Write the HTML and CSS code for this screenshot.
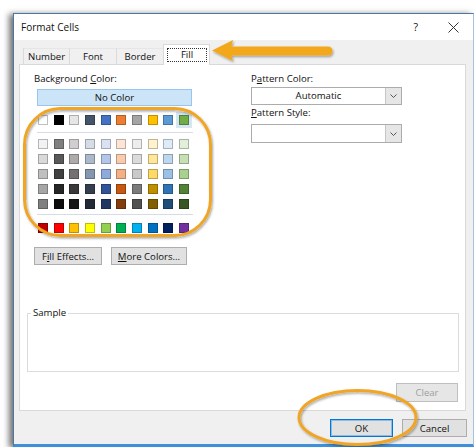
FILE: index.html
```html
<!DOCTYPE html>
<html>
<head>
<meta charset="utf-8">
<title>Format Cells</title>
<link rel="stylesheet" href="styles.css">
</head>
<body>
<div class="dialog">
  <div class="titlebar">
    <span class="title">Format Cells</span>
    <span class="help">?</span>
    <svg class="close" width="11" height="11" viewBox="0 0 11 11"><path d="M0.5 0.5L10.5 10.5M10.5 0.5L0.5 10.5" stroke="#333" stroke-width="1" fill="none"/></svg>
  </div>
  <div class="main">
    <div class="tabs">
      <div class="tab">Number</div>
      <div class="tab">Font</div>
      <div class="tab">Border</div>
      <div class="tab active"><span class="focus">Fill</span></div>
    </div>
    <div class="panel">
      <div class="top">
        <div class="left">
          <div class="label">Background <u>C</u>olor:</div>
          <div class="nocolor">No Color</div>
          <div class="palette">
            <div class="swrow">
              <span class="sw" style="background:#FFFFFF"></span>
              <span class="sw" style="background:#000000"></span>
              <span class="sw" style="background:#E7E6E6"></span>
              <span class="sw" style="background:#44546A"></span>
              <span class="sw" style="background:#4472C4"></span>
              <span class="sw" style="background:#ED7D31"></span>
              <span class="sw" style="background:#A5A5A5"></span>
              <span class="sw" style="background:#FFC000"></span>
              <span class="sw" style="background:#5B9BD5"></span>
              <span class="sw sel" style="background:#70AD47"></span>
            </div>
            <div class="sep"></div>
            <div class="swrow tints">
              <span class="sw" style="background:#F2F2F2"></span>
              <span class="sw" style="background:#808080"></span>
              <span class="sw" style="background:#D0CECE"></span>
              <span class="sw" style="background:#D6DCE4"></span>
              <span class="sw" style="background:#D9E1F2"></span>
              <span class="sw" style="background:#FCE4D6"></span>
              <span class="sw" style="background:#EDEDED"></span>
              <span class="sw" style="background:#FFF2CC"></span>
              <span class="sw" style="background:#DDEBF7"></span>
              <span class="sw" style="background:#E2EFDA"></span>

              <span class="sw" style="background:#D9D9D9"></span>
              <span class="sw" style="background:#595959"></span>
              <span class="sw" style="background:#AEAAAA"></span>
              <span class="sw" style="background:#ACB9CA"></span>
              <span class="sw" style="background:#B4C6E7"></span>
              <span class="sw" style="background:#F8CBAD"></span>
              <span class="sw" style="background:#DBDBDB"></span>
              <span class="sw" style="background:#FFE699"></span>
              <span class="sw" style="background:#BDD7EE"></span>
              <span class="sw" style="background:#C6E0B4"></span>

              <span class="sw" style="background:#BFBFBF"></span>
              <span class="sw" style="background:#404040"></span>
              <span class="sw" style="background:#757171"></span>
              <span class="sw" style="background:#8497B0"></span>
              <span class="sw" style="background:#8EA9DB"></span>
              <span class="sw" style="background:#F4B084"></span>
              <span class="sw" style="background:#C9C9C9"></span>
              <span class="sw" style="background:#FFD966"></span>
              <span class="sw" style="background:#9BC2E6"></span>
              <span class="sw" style="background:#A9D08E"></span>

              <span class="sw" style="background:#A6A6A6"></span>
              <span class="sw" style="background:#262626"></span>
              <span class="sw" style="background:#3A3838"></span>
              <span class="sw" style="background:#333F4F"></span>
              <span class="sw" style="background:#305496"></span>
              <span class="sw" style="background:#C65911"></span>
              <span class="sw" style="background:#7B7B7B"></span>
              <span class="sw" style="background:#BF8F00"></span>
              <span class="sw" style="background:#2F75B5"></span>
              <span class="sw" style="background:#548235"></span>

              <span class="sw" style="background:#808080"></span>
              <span class="sw" style="background:#0D0D0D"></span>
              <span class="sw" style="background:#171616"></span>
              <span class="sw" style="background:#222B35"></span>
              <span class="sw" style="background:#203764"></span>
              <span class="sw" style="background:#833C0C"></span>
              <span class="sw" style="background:#525252"></span>
              <span class="sw" style="background:#806000"></span>
              <span class="sw" style="background:#1F4E78"></span>
              <span class="sw" style="background:#375623"></span>
            </div>
            <div class="sep sep2"></div>
            <div class="swrow">
              <span class="sw" style="background:#C00000"></span>
              <span class="sw" style="background:#FF0000"></span>
              <span class="sw" style="background:#FFC000"></span>
              <span class="sw" style="background:#FFFF00"></span>
              <span class="sw" style="background:#92D050"></span>
              <span class="sw" style="background:#00B050"></span>
              <span class="sw" style="background:#00B0F0"></span>
              <span class="sw" style="background:#0070C0"></span>
              <span class="sw" style="background:#002060"></span>
              <span class="sw" style="background:#7030A0"></span>
            </div>
          </div>
          <div class="btnrow">
            <button class="btn fx">F<u>i</u>ll Effects...</button>
            <button class="btn more"><u>M</u>ore Colors...</button>
          </div>
        </div>
        <div class="right">
          <div class="label">P<u>a</u>ttern Color:</div>
          <div class="combo">
            <span class="val">Automatic</span>
            <span class="arrow"><svg width="7" height="4" viewBox="0 0 7 4"><path d="M0.5 0.5L3.5 3.5L6.5 0.5" stroke="#555" fill="none" stroke-width="1"/></svg></span>
          </div>
          <div class="label l2"><u>P</u>attern Style:</div>
          <div class="combo c2">
            <span class="val"></span>
            <span class="arrow"><svg width="7" height="4" viewBox="0 0 7 4"><path d="M0.5 0.5L3.5 3.5L6.5 0.5" stroke="#555" fill="none" stroke-width="1"/></svg></span>
          </div>
        </div>
      </div>
      <fieldset class="sample">
        <legend>Sample</legend>
        <div class="sample-area"></div>
      </fieldset>
      <div class="clear-row"><button class="btn clear" disabled>Clear</button></div>
    </div>
  </div>
  <div class="footer">
    <button class="btn ok">OK</button>
    <button class="btn cancel">Cancel</button>
  </div>
</div>
<svg class="annot" width="474" height="447" viewBox="0 0 474 447">
  <defs>
    <filter id="sh" x="-20%" y="-40%" width="140%" height="180%">
      <feDropShadow dx="1" dy="1.5" stdDeviation="1.2" flood-color="#000" flood-opacity="0.35"/>
    </filter>
  </defs>
  <path d="M212 50.5 L233 40 L231.5 46.5 L328 46.5 A4.5 4.5 0 0 1 328 55.5 L231.5 55.5 L233 61 Z" fill="#F3A81E" filter="url(#sh)"/>
  <rect x="24.5" y="108.5" width="186" height="127" rx="36" ry="36" fill="none" stroke="#F0A526" stroke-width="3" filter="url(#sh)"/>
  <ellipse cx="357.5" cy="417.5" rx="58.5" ry="27" fill="none" stroke="#F0A526" stroke-width="3" filter="url(#sh)"/>
</svg>
</body>
</html>
```

FILE: styles.css
```css
html, body {
  margin: 0;
  background: #ffffff;
}
body {
  width: 474px;
  height: 447px;
  overflow: hidden;
  box-sizing: border-box;
  padding: 13px 0 0 13px;
  font-family: "Open Sans", "Liberation Sans", sans-serif;
  font-size: 9.6px;
  color: #111111;
}
.dialog {
  width: 461px;
  height: 434px;
  box-sizing: border-box;
  border: 1px solid #4d77a3;
  border-right-color: #a9c1d9;
  border-bottom: 3px solid #3f8fdc;
  background: #f0f0f0;
  display: flex;
  flex-direction: column;
  box-shadow: -4px 1px 6px rgba(0, 0, 0, 0.55);
}
.titlebar {
  height: 26px;
  flex: none;
  background: #ffffff;
  display: flex;
  align-items: center;
  padding-left: 7px;
}
.title {
  font-size: 10px;
}
.help {
  margin-left: auto;
  margin-right: 30px;
  font-size: 10.5px;
}
.close {
  margin-right: 14px;
}
.main {
  flex: none;
  height: 371px;
  box-sizing: border-box;
  padding: 4px 7px 0 5px;
  display: flex;
  flex-direction: column;
}
.tabs {
  height: 20px;
  flex: none;
  display: flex;
  align-items: flex-end;
  padding-left: 4px;
}
.tab {
  width: 46px;
  height: 16px;
  box-sizing: border-box;
  border-left: 1px solid #dadada;
  border-top: 1px solid #e6e6e6;
  background: #f0f0f0;
  text-align: center;
  line-height: 15px;
}
.tab + .tab {
  width: 47px;
}
.tab.active {
  height: 21px;
  margin-bottom: -1px;
  background: #ffffff;
  border: 1px solid #d9d9d9;
  border-bottom: none;
  position: relative;
  z-index: 1;
  display: flex;
  justify-content: center;
  padding-top: 3px;
}
.focus {
  display: block;
  width: 40px;
  height: 14px;
  box-sizing: border-box;
  border: 1px dotted #333;
  line-height: 12px;
  margin-left: 1px;
}
.panel {
  flex: none;
  height: 347px;
  box-sizing: border-box;
  background: #ffffff;
  border: 1px solid #d9d9d9;
  display: flex;
  flex-direction: column;
}
.top {
  display: grid;
  grid-template-columns: 231px 151px;
}
.left {
  padding: 7px 0 0 14px;
}
.right {
  padding-top: 7px;
}
.label {
  height: 14px;
  line-height: 14px;
}
.nocolor {
  margin: 3px 0 0 3px;
  width: 155px;
  height: 17px;
  box-sizing: border-box;
  background: #cce4f7;
  border: 1px solid #99c6ec;
  text-align: center;
  line-height: 15px;
}
.palette {
  margin: 9px 0 0 4px;
  width: 151px;
}
.swrow {
  display: grid;
  grid-template-columns: repeat(10, 10px);
  column-gap: 5.67px;
  row-gap: 5px;
}
.sw {
  display: block;
  width: 10px;
  height: 10px;
  box-shadow: inset 0 0 0 1px rgba(0, 0, 0, 0.25);
}
.sw.sel {
  outline: 3px solid #d6e6f5;
}
.sep {
  height: 1px;
  width: 156px;
  margin: 7px 0 6px -1px;
  background: #d6dce5;
}
.sep.sep2 {
  margin: 5px 0 8px -1px;
}
.btnrow {
  margin-top: 14px;
  display: flex;
  gap: 9px;
}
.btn {
  height: 18px;
  box-sizing: border-box;
  border: 1px solid #adadad;
  background: #e1e1e1;
  font: inherit;
  color: #111111;
  padding: 0;
  line-height: 15px;
  text-align: center;
}
.btn.fx {
  width: 68px;
}
.btn.more {
  width: 76px;
}
.combo {
  margin-top: 1px;
  height: 18px;
  box-sizing: border-box;
  border: 1px solid #acacac;
  background: #ffffff;
  display: flex;
}
.combo .val {
  flex: 1;
  text-align: center;
  line-height: 16px;
}
.combo .arrow {
  width: 15px;
  background: #e6e6e6;
  border-left: 1px solid #c6c6c6;
  display: flex;
  align-items: center;
  justify-content: center;
}
.label.l2 {
  margin-top: 1px;
}
.combo.c2 {
  margin-top: 4px;
  height: 19px;
}
.sample {
  margin: 41px 6px 0 7px;
  padding: 0;
  border: 1px solid #dcdcdc;
  min-inline-size: 0;
}
.sample legend {
  margin-left: 3px;
  padding: 0 2px;
  line-height: 14px;
}
.sample-area {
  height: 51px;
}
.clear-row {
  margin-top: 11px;
  display: flex;
  justify-content: flex-end;
  padding-right: 7px;
}
.btn.clear {
  width: 62px;
  height: 19px;
  background: #e6e6e6;
  border-color: #bfbfbf;
  color: #a0a0a0;
}
.footer {
  flex: 1;
  display: flex;
  justify-content: flex-end;
  gap: 9px;
  padding: 8px 6px 0 0;
}
.btn.ok {
  width: 63px;
  border-color: #0078d7;
  box-shadow: inset 0 0 0 1px rgba(0, 120, 215, 0.35);
}
.btn.cancel {
  width: 65px;
}
.annot {
  position: absolute;
  left: 0;
  top: 0;
  pointer-events: none;
}
```
